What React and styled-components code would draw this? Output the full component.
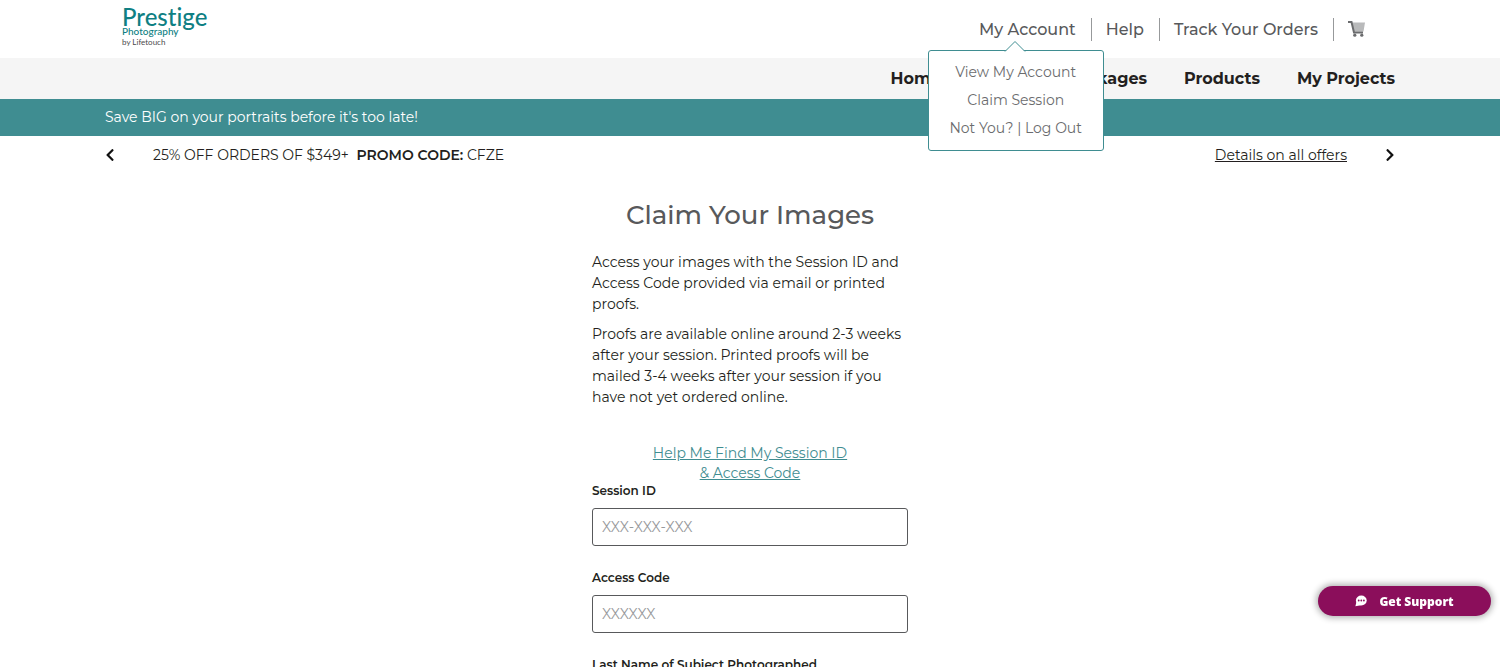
import React from "react";
import styled, { createGlobalStyle } from "styled-components";
import { FaChevronLeft, FaChevronRight } from "react-icons/fa";

const offer = {
  text: "25% OFF ORDERS OF $349+",
  code: "CFZE",
};

const mainLinks = ["Home", "Prices", "Packages", "Products", "My Projects"];

const fields = [
  { id: "sessionId", label: "Session ID", placeholder: "XXX-XXX-XXX" },
  { id: "accessCode", label: "Access Code", placeholder: "XXXXXX" },
  { id: "lastName", label: "Last Name of Subject Photographed" },
];

const Header = () => (
  <TopBar>
    <Logo href="#" aria-label="Prestige Photography by Lifetouch">
      <LogoName>Prestige</LogoName>
      <LogoType>Photography</LogoType>
      <LogoBy>by Lifetouch</LogoBy>
    </Logo>
    <TopLinks>
      <TopItem>
        <TopLink href="#">My Account</TopLink>
        <AccountMenu>
          <MenuArrow viewBox="0 0 22 12" aria-hidden="true">
            <path d="M1 11.5L11 1.5l10 10" fill="#fff" stroke="#3f8d91" />
          </MenuArrow>
          <MenuLink href="#">View My Account</MenuLink>
          <MenuLink href="#">Claim Session</MenuLink>
          <MenuLink href="#">Not You? | Log Out</MenuLink>
        </AccountMenu>
      </TopItem>
      <TopItem>
        <TopLink href="#">Help</TopLink>
      </TopItem>
      <TopItem>
        <TopLink href="#">Track Your Orders</TopLink>
      </TopItem>
      <TopItem>
        <TopLink href="#" aria-label="Cart">
          <CartIcon viewBox="0 0 17 16" fill="none">
            <path d="M4 1.5H17L15.5 10.5H6z" fill="#b9babb" />
            <path
              d="M0 1H3.5L6 11.5H15"
              stroke="#6b6c6e"
              strokeWidth="2"
            />
            <circle cx="6.8" cy="14.2" r="1.6" fill="#6b6c6e" />
            <circle cx="13.8" cy="14.2" r="1.6" fill="#6b6c6e" />
          </CartIcon>
        </TopLink>
      </TopItem>
    </TopLinks>
  </TopBar>
);

const ClaimForm = () => (
  <Column>
    <Title>Claim Your Images</Title>
    <Text>
      Access your images with the Session ID and Access Code provided via email
      or printed proofs.
    </Text>
    <Text>
      Proofs are available online around 2-3 weeks after your session. Printed
      proofs will be mailed 3-4 weeks after your session if you have not yet
      ordered online.
    </Text>
    <HelpLink href="#">Help Me Find My Session ID & Access Code</HelpLink>
    <form>
      {fields.map((field) => (
        <Field key={field.id}>
          <Label htmlFor={field.id}>{field.label}</Label>
          <Input id={field.id} type="text" placeholder={field.placeholder} />
        </Field>
      ))}
    </form>
  </Column>
);

const App = () => (
  <>
    <GlobalStyle />
    <Header />
    <MainNav>
      {mainLinks.map((link) => (
        <MainLink key={link} href="#">
          {link}
        </MainLink>
      ))}
    </MainNav>
    <Banner>Save BIG on your portraits before it's too late!</Banner>
    <Offers>
      <ArrowButton aria-label="Previous offer">
        <FaChevronLeft />
      </ArrowButton>
      <Offer>
        {offer.text} <strong>PROMO CODE:</strong> {offer.code}
      </Offer>
      <OfferLink href="#">Details on all offers</OfferLink>
      <ArrowButton aria-label="Next offer">
        <FaChevronRight />
      </ArrowButton>
    </Offers>
    <ClaimForm />
    <Support>
      <ChatIcon viewBox="0 0 12 12" aria-hidden="true">
        <ellipse cx="6.3" cy="5.5" rx="5.4" ry="5" fill="#fff" />
        <path d="M1.6 6.5L0.4 11.2L6 10.2z" fill="#fff" />
        <circle cx="3.7" cy="5.5" r="0.9" fill="#8b0e5b" />
        <circle cx="6.3" cy="5.5" r="0.9" fill="#8b0e5b" />
        <circle cx="8.9" cy="5.5" r="0.9" fill="#8b0e5b" />
      </ChatIcon>
      Get Support
    </Support>
  </>
);

const GlobalStyle = createGlobalStyle`
  *, *::before, *::after {
    box-sizing: border-box;
  }

  body {
    margin: 0;
    background: #fff;
    color: #231f20;
    font-family: Montserrat, Inter, sans-serif;
    font-size: 14px;
  }

  ::-webkit-scrollbar {
    display: none;
  }
`;

const TopBar = styled.header`
  display: flex;
  justify-content: space-between;
  align-items: center;
  height: 58px;
  padding: 0 9% 0 8%;
`;

const Logo = styled.a`
  display: flex;
  flex-direction: column;
  padding: 0 0 4px 2px;
  color: #0f7f83;
  font-family: Lato, sans-serif;
  font-variant-ligatures: none;
  text-decoration: none;
`;

const LogoName = styled.span`
  font-size: 24px;
  font-weight: 500;
  line-height: 21px;
`;

const LogoType = styled.span`
  font-size: 10px;
  font-weight: 500;
  line-height: 9px;
`;

const LogoBy = styled.span`
  color: #4a4a4a;
  font-size: 8px;
  line-height: 12px;
`;

const TopLinks = styled.nav`
  display: flex;
  align-items: center;
`;

const TopItem = styled.div`
  position: relative;
  display: flex;
  align-items: center;
  height: 23px;
  padding: 0 15px 0 14px;

  &:last-child {
    padding-right: 0;
  }

  & + & {
    border-left: 1px solid #97999b;
  }
`;

const TopLink = styled.a`
  display: flex;
  color: #58595b;
  font-size: 16px;
  font-weight: 500;
  text-decoration: none;
`;

const CartIcon = styled.svg`
  width: 17px;
  height: 16px;
`;

const AccountMenu = styled.div`
  position: absolute;
  z-index: 1;
  top: 32px;
  right: -13px;
  display: flex;
  flex-direction: column;
  align-items: center;
  width: 176px;
  padding: 7px 0 8px;
  border: 1px solid #3f8d91;
  border-radius: 3px;
  background: #fff;
`;

const MenuArrow = styled.svg`
  position: absolute;
  top: -11px;
  left: 75px;
  width: 22px;
  height: 12px;
`;

const MenuLink = styled.a`
  color: #6b6c6e;
  line-height: 28px;
  text-decoration: none;
`;

const MainNav = styled.nav`
  display: flex;
  justify-content: flex-end;
  align-items: center;
  gap: 37px;
  height: 41px;
  padding: 0 7%;
  background: #f5f5f5;
`;

const MainLink = styled.a`
  color: #231f20;
  font-size: 16px;
  font-weight: 700;
  text-decoration: none;
`;

const Banner = styled.div`
  padding: 0 7%;
  background: #3f8d91;
  color: #fff;
  line-height: 37px;
`;

const Offers = styled.div`
  display: flex;
  align-items: center;
  height: 37px;
  padding: 0 7%;
`;

const ArrowButton = styled.button`
  display: flex;
  padding: 0;
  border: 0;
  background: none;
  color: #111;

  svg {
    width: 10px;
    height: 14px;
  }
`;

const Offer = styled.span`
  flex: 1;
  padding-left: 38px;

  strong {
    margin-left: 4px;
    font-weight: 600;
  }
`;

const OfferLink = styled.a`
  padding-right: 38px;
  color: #231f20;
`;

const Column = styled.main`
  width: 316px;
  margin: 24px auto 48px;
`;

const Title = styled.h1`
  margin: 0 0 19px;
  color: #58595b;
  font-size: 26px;
  font-weight: 500;
  line-height: 36px;
  text-align: center;
`;

const Text = styled.p`
  margin: 0 0 9px;
  line-height: 21px;
`;

const HelpLink = styled.a`
  display: block;
  width: 200px;
  margin: 35px auto 0;
  color: #3f8d91;
  line-height: 20px;
  text-align: center;
`;

const Field = styled.div`
  display: flex;
  flex-direction: column;
  gap: 9px;
  margin-bottom: 24px;
`;

const Label = styled.label`
  font-size: 12px;
  font-weight: 600;
  line-height: 16px;
`;

const Input = styled.input`
  width: 100%;
  height: 38px;
  padding: 0 9px;
  border: 1px solid #58595b;
  border-radius: 3px;
  background: #fff;
  font-family: inherit;
  font-size: 14px;

  &::placeholder {
    color: #97999b;
  }
`;

const Support = styled.button`
  position: fixed;
  right: 9px;
  bottom: 51px;
  display: flex;
  justify-content: center;
  align-items: center;
  gap: 12px;
  width: 173px;
  height: 30px;
  border: 0;
  border-radius: 15px;
  background: #8b0e5b;
  box-shadow: 0 0 6px 2px rgba(0, 0, 0, 0.3);
  color: #fff;
  font-family: "Open Sans", sans-serif;
  font-size: 12px;
  font-weight: 800;
`;

const ChatIcon = styled.svg`
  width: 12px;
  height: 12px;
`;

export default App;
